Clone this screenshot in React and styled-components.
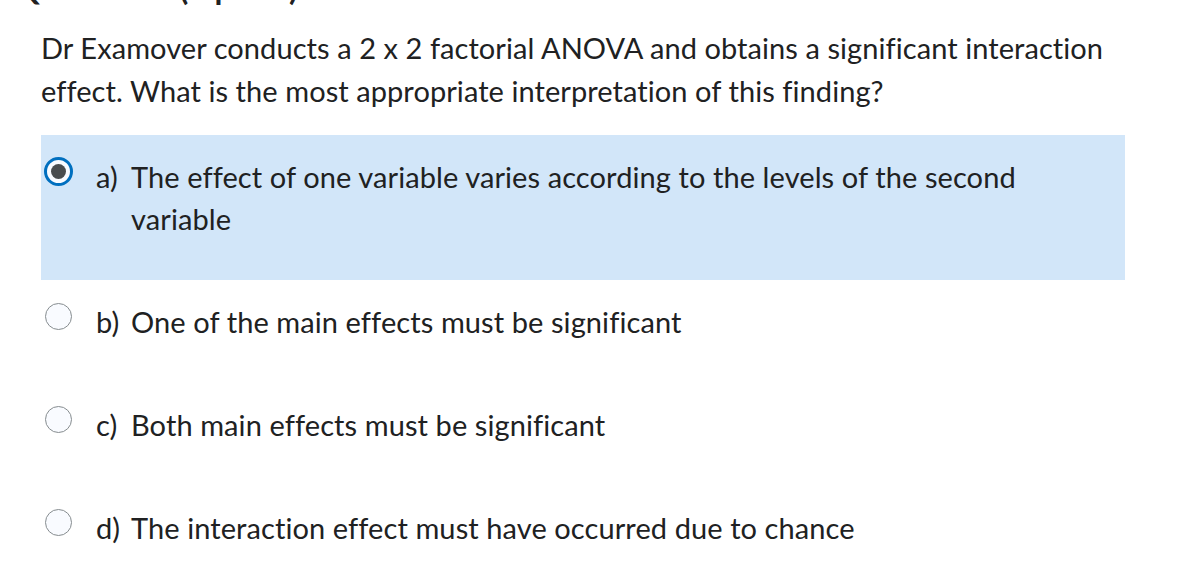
import React from "react";
import styled, { createGlobalStyle } from "styled-components";

const GlobalStyle = createGlobalStyle`
  html, body {
    margin: 0;
    padding: 0;
    background: #ffffff;
  }
  body {
    font-family: Lato, "Noto Sans", sans-serif;
    font-variant-ligatures: none;
    color: #202122;
  }
`;

const Page = styled.div`
  width: 1084px;
  padding: 0 0 0 41px;
  overflow: hidden;
  height: 575px;
`;

const Heading = styled.h2`
  margin: -27px 0 23px -27px;
  font-size: 32px;
  font-weight: 700;
  line-height: 30px;
  height: 30px;
  color: #202122;
`;

const Question = styled.p`
  margin: 0 0 23px;
  font-size: 29px;
  line-height: 43px;
  letter-spacing: 0.07px;
`;

const Options = styled.div`
  display: flex;
  flex-direction: column;
`;

const Option = styled.label`
  display: flex;
  align-items: flex-start;
  padding: 21px 0 40px 3px;
  background: ${(p) => (p.$selected ? "#d2e6f9" : "transparent")};
  font-size: 29px;
  line-height: 42px;
  letter-spacing: 0.09px;
  cursor: pointer;
`;

const Radio = styled.span`
  flex: none;
  box-sizing: border-box;
  width: ${(p) => (p.$checked ? 29 : 27)}px;
  height: ${(p) => (p.$checked ? 29 : 27)}px;
  margin-top: ${(p) => (p.$checked ? 1 : 2)}px;
  margin-left: ${(p) => (p.$checked ? 0 : 1)}px;
  margin-right: ${(p) => (p.$checked ? 23 : 24)}px;
  border-radius: 50%;
  border: ${(p) => (p.$checked ? "3px solid #006fbf" : "1px solid #868c8f")};
  background: #f9fbff;
  display: flex;
  align-items: center;
  justify-content: center;

  &::after {
    content: "";
    display: ${(p) => (p.$checked ? "block" : "none")};
    width: 15px;
    height: 15px;
    border-radius: 50%;
    background: #494c4e;
  }
`;

const Letter = styled.span`
  flex: none;
  width: 35px;
`;

const Text = styled.span`
  flex: 1;
  padding-right: 90px;
`;

const options = [
  { id: "a", text: "The effect of one variable varies according to the levels of the second variable" },
  { id: "b", text: "One of the main effects must be significant" },
  { id: "c", text: "Both main effects must be significant" },
  { id: "d", text: "The interaction effect must have occurred due to chance" },
];

const App = () => {
  const selected = "a";
  return (
    <>
      <GlobalStyle />
      <Page>
        <Heading>Question 3 (1 point)</Heading>
        <Question>
          Dr Examover conducts a 2 x 2 factorial ANOVA and obtains a significant interaction
          effect. What is the most appropriate interpretation of this finding?
        </Question>
        <Options>
          {options.map((o) => (
            <Option key={o.id} $selected={o.id === selected}>
              <Radio $checked={o.id === selected} />
              <Letter>{o.id})</Letter>
              <Text>{o.text}</Text>
            </Option>
          ))}
        </Options>
      </Page>
    </>
  );
};

export default App;
